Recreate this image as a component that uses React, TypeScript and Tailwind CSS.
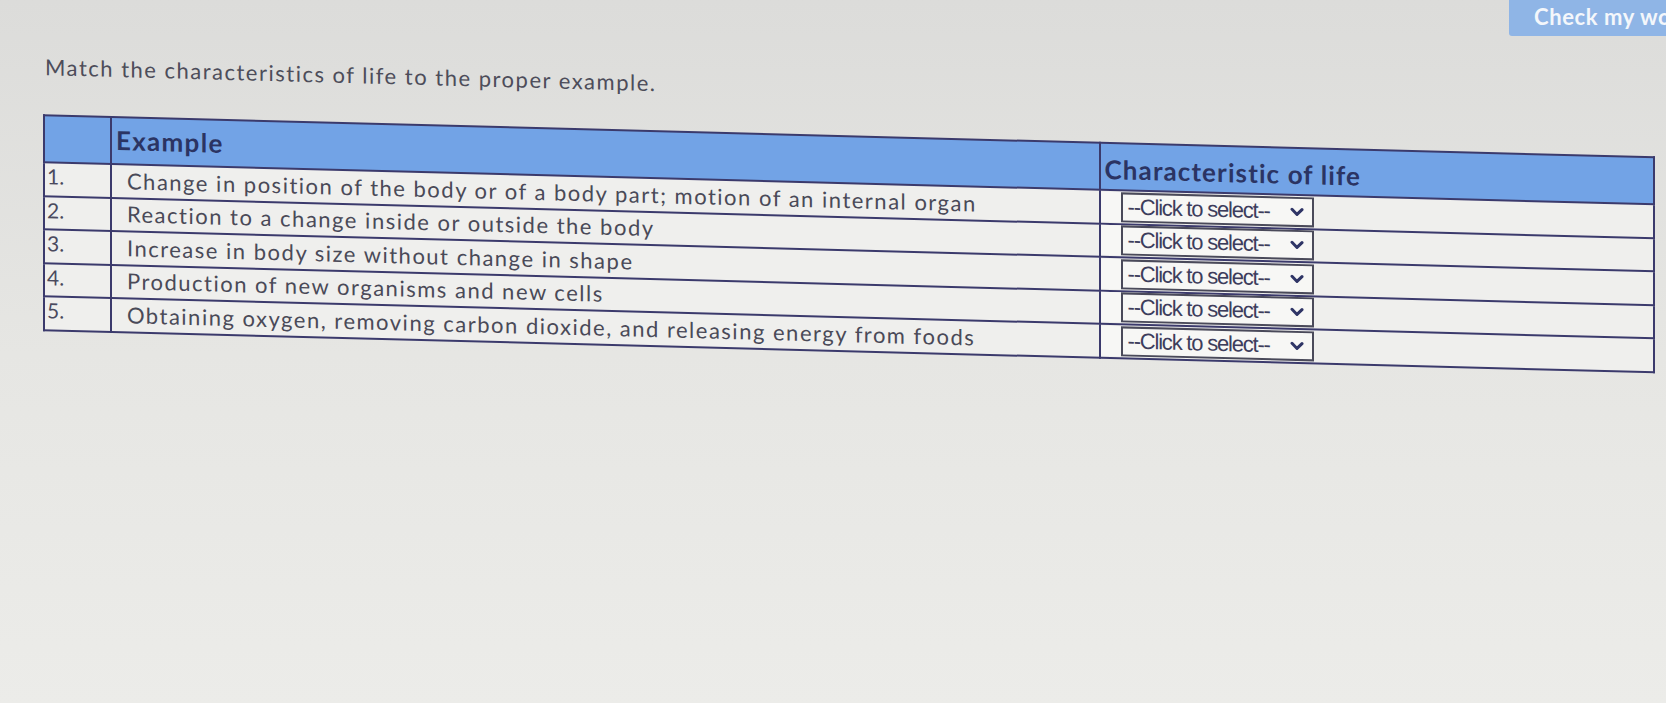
import React from "react";

const rows = [
  "Change in position of the body or of a body part; motion of an internal organ",
  "Reaction to a change inside or outside the body",
  "Increase in body size without change in shape",
  "Production of new organisms and new cells",
  "Obtaining oxygen, removing carbon dioxide, and releasing energy from foods",
];

function Chevron() {
  return (
    <svg width="14" height="10" viewBox="0 0 14 10" className="shrink-0">
      <path d="M2 2.5 L7 7.5 L12 2.5" fill="none" stroke="#2f3566" strokeWidth="3" strokeLinecap="round" strokeLinejoin="round" />
    </svg>
  );
}

function SelectBox() {
  return (
    <div className="flex h-[30px] w-[193px] items-center justify-between border-2 border-[#4a4a5a] bg-[#f7f7f5] pl-[5px] pr-[8px]">
      <span className="text-[22px] leading-none tracking-[-1.2px] text-[#3d3d5c]" style={{ fontFamily: '"Liberation Sans", Arial, sans-serif' }}>
        --Click to select--
      </span>
      <Chevron />
    </div>
  );
}

export default function App() {
  return (
    <div
      className="relative h-[703px] w-[1666px] overflow-hidden bg-gradient-to-b from-[#dcdcda] via-[#e6e6e3] to-[#ecece9]"
      style={{ fontFamily: 'Lato, "Open Sans", Arial, sans-serif' }}
    >
      <div className="flex h-[36px] justify-end">
        <button className="-mr-[80px] h-[36px] w-[237px] shrink-0 whitespace-nowrap rounded-bl-[3px] bg-[#8fb5e6] pb-[12px] pl-[25px] text-left text-[22px] font-bold tracking-[0.6px] text-[#f4f7fb]">
          Check my work
        </button>
      </div>

      <div className="origin-top-left skew-y-[1.5deg] pl-[45px] pt-[16px]">
        <p className="text-[22px] leading-[28px] tracking-[1.5px] text-[#4d4d5a]">Match the characteristics of life to the proper example.</p>

        <table className="-ml-[2px] mt-[33px] w-[1612px] border-collapse">
          <colgroup>
            <col className="w-[67px]" />
            <col className="w-[990px]" />
            <col className="w-[555px]" />
          </colgroup>
          <thead>
            <tr className="h-[44px] bg-[#72a3e6]">
              <th className="border-2 border-[#3b3a6c]"></th>
              <th className="border-2 border-[#3b3a6c] pl-[4px] text-left align-middle text-[26px] font-bold tracking-[1.3px] text-[#2b3463]">Example</th>
              <th className="border-2 border-[#3b3a6c] pl-[4px] pt-[6px] text-left align-middle text-[26px] font-bold tracking-[1.1px] text-[#2b3463]">Characteristic of life</th>
            </tr>
          </thead>
          <tbody>
            {rows.map((r, i) => (
              <tr key={i} className="h-[33.5px] bg-[#efefed]">
                <td className="border-2 border-[#3b3a6c] pl-[2px] align-top text-[21px] leading-[26px] text-[#4a4a5e]">{i + 1}.</td>
                <td className="border-2 border-[#3b3a6c] pl-[15px] align-middle text-[22px] leading-[28px] tracking-[1.5px] text-[#4a4a58]">{r}</td>
                <td className="border-2 border-[#3b3a6c] p-0 align-middle">
                  <div className="flex h-[30px] items-center">
                    <div className="h-full w-[20px] bg-[#f7f7f5]" />
                    <SelectBox />
                  </div>
                </td>
              </tr>
            ))}
          </tbody>
        </table>
      </div>
    </div>
  );
}
